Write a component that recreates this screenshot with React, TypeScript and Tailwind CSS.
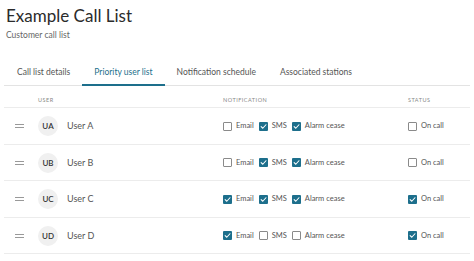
import React from "react";

type User = {
  initials: string;
  name: string;
  email: boolean;
  sms: boolean;
  alarm: boolean;
  onCall: boolean;
};

const users: User[] = [
  { initials: "UA", name: "User A", email: false, sms: true, alarm: true, onCall: false },
  { initials: "UB", name: "User B", email: false, sms: true, alarm: true, onCall: false },
  { initials: "UC", name: "User C", email: true, sms: true, alarm: true, onCall: true },
  { initials: "UD", name: "User D", email: true, sms: false, alarm: false, onCall: true },
];

const tabs = ["Call list details", "Priority user list", "Notification schedule", "Associated stations"];

function Check({ checked, label }: { checked: boolean; label: string }) {
  return (
    <span className="flex items-center gap-[4px]">
      {checked ? (
        <span className="flex h-[9px] w-[9px] items-center justify-center rounded-[1px] bg-[#1d6f8c]">
          <svg width="7" height="7" viewBox="0 0 8 8" fill="none">
            <path d="M1.3 4.2 3.2 6 6.8 2" stroke="white" strokeWidth="1.2" strokeLinecap="round" strokeLinejoin="round" />
          </svg>
        </span>
      ) : (
        <span className="h-[9px] w-[9px] rounded-[1px] border border-[#8a8a8a] bg-white" />
      )}
      <span className="text-[7.5px] text-[#555]">{label}</span>
    </span>
  );
}

export default function App() {
  return (
    <div className="h-[261px] w-[474px] overflow-hidden bg-white px-[4px] font-['Lato','Noto_Sans',sans-serif] text-[#333]">
      <div className="px-[2px] pt-[5px]">
        <h1 className="text-[17px] leading-[22px] text-[#2b2b2b]">Example Call List</h1>
        <p className="mt-[3px] text-[8.5px] leading-[10px] text-[#666]">Customer call list</p>
      </div>

      <div className="mt-[25px] flex border-b border-[#e3e3e3] pl-[1px]">
        {tabs.map((t, i) => (
          <div
            key={t}
            className={`-mb-px px-[12px] pb-[6px] pt-[1px] text-[8.5px] leading-[12px] ${
              i === 1 ? "border-b-2 border-[#1d6f8c] text-[#1d6f8c]" : "border-b-2 border-transparent text-[#555]"
            }`}
          >
            {t}
          </div>
        ))}
      </div>

      <div className="grid grid-cols-[34px_185px_185px_1fr] border-b border-[#ececec] pt-[10px] pb-[3px] text-[5.5px] uppercase tracking-[0.5px] text-[#888]">
        <span />
        <span>User</span>
        <span>Notification</span>
        <span>Status</span>
      </div>

      {users.map(u => (
        <div key={u.initials} className="grid h-[36.5px] grid-cols-[34px_185px_185px_1fr] items-center border-b border-[#ececec]">
          <span className="flex pl-[11px]">
            <span className="flex w-[9px] flex-col gap-[2px]">
              <span className="h-px bg-[#999]" />
              <span className="h-px bg-[#999]" />
            </span>
          </span>
          <span className="flex items-center gap-[9px]">
            <span className="flex h-[20px] w-[20px] items-center justify-center rounded-full bg-[#f0f0f0] text-[8px] font-semibold text-[#333]">
              {u.initials}
            </span>
            <span className="text-[9px] text-[#555]">{u.name}</span>
          </span>
          <span className="flex items-center gap-[5px]">
            <Check checked={u.email} label="Email" />
            <Check checked={u.sms} label="SMS" />
            <Check checked={u.alarm} label="Alarm cease" />
          </span>
          <span className="flex">
            <Check checked={u.onCall} label="On call" />
          </span>
        </div>
      ))}
    </div>
  );
}
